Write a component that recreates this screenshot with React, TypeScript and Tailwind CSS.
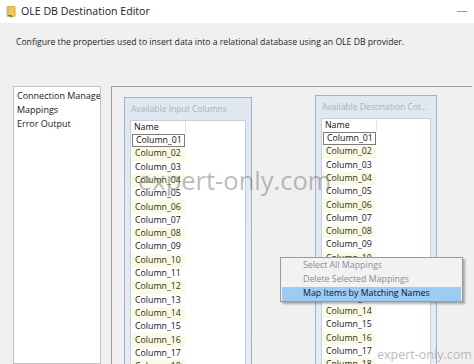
import React from 'react';

const rows = Array.from({ length: 18 }, (_, i) => `Column_${String(i + 1).padStart(2, '0')}`);

function AppIcon() {
  return (
    <svg width="10" height="12" viewBox="0 0 10 12">
      <rect x="1" y="0.5" width="8" height="10" rx="1" fill="#f2c94c" stroke="#c99a1e" strokeWidth="0.8" />
      <rect x="1" y="0.5" width="2" height="10" fill="#b9b9b9" />
      <path d="M2 9.5 L5 9.5 L5 11.5" fill="none" stroke="#3a78c9" strokeWidth="1.2" />
    </svg>
  );
}

function ColumnBox({ title, className }: { title: string; className: string }) {
  return (
    <div className={`flex flex-col border border-[#a3b1c2] bg-gradient-to-b from-[#dfe7f1] to-[#e6edf5] px-[5px] ${className}`}>
      <div className="h-[22px] flex items-center px-[1px] text-[8.5px] text-[#a9b2bd] whitespace-nowrap overflow-hidden">{title}</div>
      <div className="flex-1 bg-white border border-[#c5cfda]">
        <div className="flex h-[13px] items-center">
          <div className="w-[55px] h-full border-r border-[#e3e3e3] flex items-center pl-[3px] text-[8.8px] text-[#111]">Name</div>
        </div>
        {rows.map((r, i) => (
          <div key={r} className="h-[13.3px] flex items-center">
            <div
              className={`w-[53px] ml-[1px] h-full flex items-center pl-[3px] text-[8.8px] ${
                i === 0 ? 'border border-[#7c7c7c] bg-white text-[#111]' : i % 2 === 1 ? 'bg-[#fafae6] text-[#2e2e12]' : 'text-[#151515]'
              }`}
            >
              {r}
            </div>
          </div>
        ))}
      </div>
    </div>
  );
}

export default function App() {
  return (
    <div className="relative w-[474px] h-[364px] overflow-hidden bg-[#f0f0f0] font-['Open_Sans',sans-serif] text-[#1a1a1a] flex flex-col">
      {/* title bar */}
      <div className="h-[23px] shrink-0 bg-white flex items-center pl-[6px] pr-[7px]">
        <AppIcon />
        <span className="ml-[5px] text-[10.6px] text-[#222]">OLE DB Destination Editor</span>
        <span className="ml-auto w-[10px] h-px bg-[#9a9a9a]" />
      </div>

      {/* description */}
      <div className="h-[63px] shrink-0 pl-[16px] pt-[12px] text-[8.65px] leading-[14px] text-[#1e1e1e]">
        Configure the properties used to insert data into a relational database using an OLE DB provider.
      </div>

      <div className="flex flex-1 min-h-0">
        {/* nav */}
        <div className="ml-[13px] w-[88px] bg-white border border-[#c2c2c2] pl-[3px] pt-[2px] text-[9px] leading-[14px] overflow-hidden whitespace-nowrap">
          <div>Connection Manager</div>
          <div>Mappings</div>
          <div>Error Output</div>
        </div>

        {/* mapping pane */}
        <div className="ml-[10px] flex-1 mr-[2px] border-l border-t border-[#a0a0a0] flex items-start pl-[12px]">
          <ColumnBox title="Available Input Columns" className="w-[128px] h-[300px] mt-[10px]" />
          <ColumnBox title="Available Destination Col..." className="w-[122px] h-[300px] mt-[8px] ml-[63px]" />
        </div>
      </div>

      {/* context menu */}
      <div className="absolute left-[280px] top-[257px] w-[183px] h-[45px] bg-[#f2f2f2] border border-[#9a9a9a] shadow-[2px_2px_2px_rgba(0,0,0,0.3)] pt-[1px] px-[1px] text-[8.8px]">
        <div className="h-[14px] flex items-center pl-[21px] text-[#8e8e8e]">Select All Mappings</div>
        <div className="h-[14px] flex items-center pl-[21px] text-[#8e8e8e]">Delete Selected Mappings</div>
        <div className="h-[14px] flex items-center pl-[21px] bg-[#9ccbf3] text-[#10182a]">Map Items by Matching Names</div>
      </div>

      {/* watermarks */}
      <div className="absolute left-[138px] top-[164px] text-[25.5px] leading-[32px] text-[#7a7a7a]/50 pointer-events-none">
        expert-only.com
      </div>
      <div className="absolute left-[377px] top-[346px] text-[12.5px] leading-[18px] text-[#a8a8a8]/80 pointer-events-none">
        expert-only.com
      </div>
    </div>
  );
}
